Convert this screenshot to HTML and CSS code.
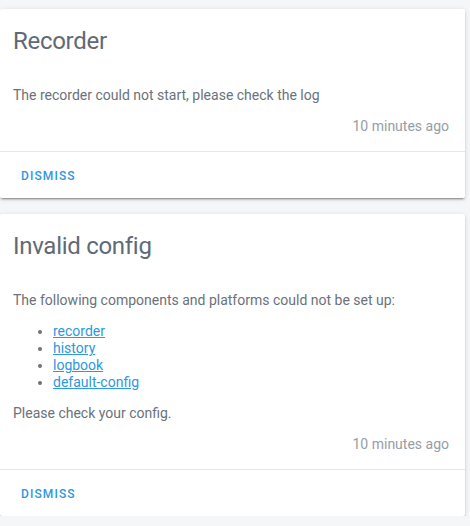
FILE: index.html
```html
<!DOCTYPE html>
<html lang="en">
<head>
  <meta charset="UTF-8" />
  <title>Notifications</title>
  <link rel="stylesheet" href="styles.css">
</head>
<body>
  <div class="notifications">
    <div class="card">
      <div class="card-header">Recorder</div>
      <div class="card-content">
        <p>The recorder could not start, please check the log</p>
        <div class="time">10 minutes ago</div>
      </div>
      <div class="card-actions">
        <button class="dismiss">Dismiss</button>
      </div>
    </div>

    <div class="card">
      <div class="card-header">Invalid config</div>
      <div class="card-content">
        <p>The following components and platforms could not be set up:</p>
        <ul>
          <li><a href="#">recorder</a></li>
          <li><a href="#">history</a></li>
          <li><a href="#">logbook</a></li>
          <li><a href="#">default-config</a></li>
        </ul>
        <p>Please check your config.</p>
        <div class="time">10 minutes ago</div>
      </div>
      <div class="card-actions">
        <button class="dismiss">Dismiss</button>
      </div>
    </div>
  </div>
</body>
</html>
```

FILE: styles.css
```css
body {
  margin: 0;
  font-family: Roboto, "Noto Sans", sans-serif;
  background-color: #f5f6f8;
  color: #6a727b;
}
.notifications {
  display: flex;
  flex-direction: column;
  gap: 16px;
  width: 465px;
  padding-top: 9px;
}
.card {
  background: #fff;
  border-radius: 2px;
  box-shadow: 0 2px 2px 0 rgba(0,0,0,.14), 0 1px 5px 0 rgba(0,0,0,.12), 0 3px 1px -2px rgba(0,0,0,.2);
}
.card-header {
  font-size: 24px;
  line-height: 32px;
  letter-spacing: -0.012em;
  color: #5f6a75;
  padding: 16px 16px 16px 13px;
}
.card-content {
  font-size: 14px;
  line-height: 17px;
  padding: 0 16px 16px 13px;
}
.card-content p {
  margin: 14px 0;
}
.card-content ul {
  margin: 14px 0;
  padding-left: 40px;
}
.card-content a {
  color: #2d98de;
}
.time {
  margin-top: 14px;
  text-align: right;
  color: #959ea7;
}
.card-actions {
  border-top: 1px solid #e6e6e6;
  padding: 5px 13px;
}
.dismiss {
  height: 36px;
  padding: 2px 8px 0;
  border: none;
  background: none;
  font-family: Roboto, sans-serif;
  font-size: 12px;
  font-weight: 500;
  letter-spacing: 1.1px;
  text-transform: uppercase;
  color: #2d98de;
  cursor: pointer;
}
```
